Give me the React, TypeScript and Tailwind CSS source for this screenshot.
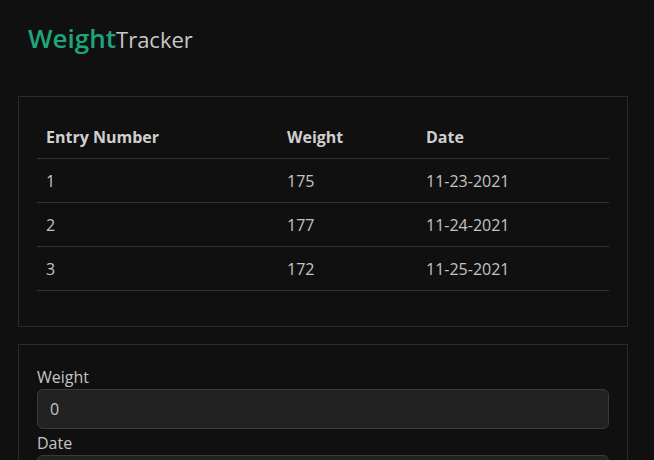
const entries = [
  { id: 1, weight: 175, date: "11-23-2021" },
  { id: 2, weight: 177, date: "11-24-2021" },
  { id: 3, weight: 172, date: "11-25-2021" },
]

export default function App() {
  return (
    <div className="min-h-screen bg-[#101010] pl-[18px] pr-[26px] text-[#c4c4c4]" style={{ fontFamily: '"Open Sans", "Noto Sans", sans-serif' }}>
      {/* header */}
      <div className="pt-[20px] pl-[10px] h-[96px]">
        <h1 className="leading-[36px]">
          <span className="text-[26px] font-semibold text-[#1fa57c]">Weight</span>
          <span className="text-[22px] text-[#c8c8c8]">Tracker</span>
        </h1>
      </div>

      {/* entries */}
      <div className="border border-[#2a2a2a] p-[18px]">
        <table className="w-full mb-[17px] text-[16px]">
          <thead>
            <tr className="border-b border-[#333]">
              <th className="w-[241px] h-[43px] px-[9px] pt-[2px] text-left font-bold text-[#cfcfcf]">Entry Number</th>
              <th className="w-[139px] px-[9px] pt-[2px] text-left font-bold text-[#cfcfcf]">Weight</th>
              <th className="px-[9px] pt-[2px] text-left font-bold text-[#cfcfcf]">Date</th>
            </tr>
          </thead>
          <tbody>
            {entries.map((e) => (
              <tr key={e.id} className="border-b border-[#333]">
                <td className="h-[44px] px-[9px] pt-[2px]">{e.id}</td>
                <td className="px-[9px] pt-[2px]">{e.weight}</td>
                <td className="px-[9px] pt-[2px]">{e.date}</td>
              </tr>
            ))}
          </tbody>
        </table>
      </div>

      {/* add entry form */}
      <div className="mt-[17px] border border-[#2a2a2a] px-[18px] pt-[20px] pb-[18px]">
        <label className="block text-[16px] leading-[24px]">Weight</label>
        <input
          type="number"
          defaultValue={0}
          className="block w-full h-[40px] rounded-[6px] border border-[#3a3a3a] bg-[#222] px-3 text-[16px] text-[#c4c4c4] outline-none"
        />
        <label className="block text-[16px] leading-[24px] mt-[2px]">Date</label>
        <input
          type="text"
          className="block w-full h-[40px] rounded-[6px] border border-[#3a3a3a] bg-[#222] px-3 text-[16px] text-[#c4c4c4] outline-none"
        />
      </div>
    </div>
  )
}
